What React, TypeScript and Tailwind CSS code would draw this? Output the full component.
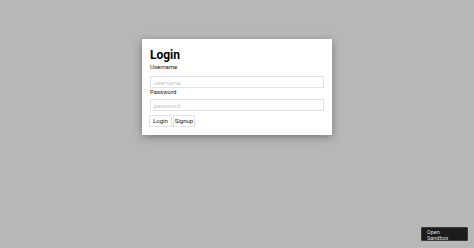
import * as React from "react"

export default function App() {
  const [values, setValues] = React.useState({ username: "", password: "" })

  const handleChange = (event: React.ChangeEvent<HTMLInputElement>) => {
    const { name, value } = event.target
    setValues((prev) => ({ ...prev, [name]: value }))
  }

  return (
    <div className="relative h-[248px] w-full bg-[#b7b7b7] font-['Roboto',sans-serif] overflow-hidden">
      <div className="flex justify-center pt-[39px]">
        <div className="w-[190px] h-[96px] bg-white shadow-[0_2px_8px_rgba(0,0,0,0.35)] px-[8px] pt-[9px]">
          <h1 className="text-[12px] leading-[14px] font-bold text-black">Login</h1>
          <label htmlFor="username" className="block mt-[2px] text-[6px] leading-[6px] text-[#1a1a1a]">
            Username
          </label>
          <input
            id="username"
            name="username"
            value={values.username}
            onChange={handleChange}
            placeholder="username"
            className="mt-[6px] block w-[174px] h-[12px] border border-[#e2e2e2] px-[3px] text-[6px] placeholder:text-[#c4c4c4] outline-none"
          />
          <label htmlFor="password" className="block mt-[1px] text-[6px] leading-[6px] text-[#1a1a1a]">
            Password
          </label>
          <input
            id="password"
            name="password"
            type="password"
            value={values.password}
            onChange={handleChange}
            placeholder="password"
            className="mt-[4px] block w-[174px] h-[12px] border border-[#e2e2e2] px-[3px] text-[6px] placeholder:text-[#c4c4c4] outline-none"
          />
          <div className="flex gap-[1px] mt-[4px] -ml-[1px]">
            <button className="w-[23px] h-[12px] border border-[#e2e2e2] bg-white text-[6px] leading-none text-[#222]">
              Login
            </button>
            <button className="w-[22px] h-[12px] border border-[#e2e2e2] bg-white text-[6px] leading-none text-[#222]">
              Signup
            </button>
          </div>
        </div>
      </div>
      <div className="absolute left-[421px] top-[227px] w-[47px] h-[14px] bg-[#1c1c1c] border border-[#3a3a3a] rounded-[1px] px-[5px] text-[5.5px] leading-[6px] text-[#ddd] pt-[1px]">
        Open
        <br />
        Sandbox
      </div>
    </div>
  )
}
